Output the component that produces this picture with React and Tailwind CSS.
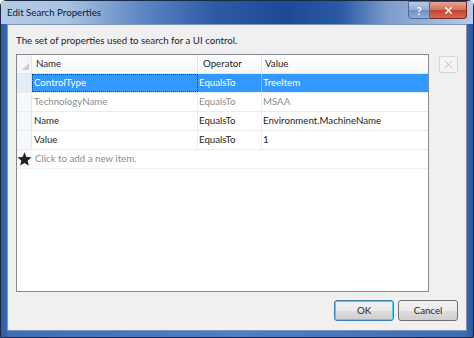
import { X } from 'lucide-react'

const rows = [
  { name: 'ControlType', op: 'EqualsTo', value: 'TreeItem', selected: true },
  { name: 'TechnologyName', op: 'EqualsTo', value: 'MSAA', disabled: true },
  { name: 'Name', op: 'EqualsTo', value: 'Environment.MachineName' },
  { name: 'Value', op: 'EqualsTo', value: '1' },
]

function Row({ row }) {
  const text = row.selected ? 'text-white' : row.disabled ? 'text-[#8d8d8d]' : 'text-[#1e1e1e]'
  return (
    <div className="grid grid-cols-[15px_166px_64px_1fr] h-[19px] border-b border-[#ececec]">
      <div className={row.selected ? 'bg-[#e3edf8] border-r border-[#dde3ea]' : 'bg-[#f7f8fa] border-r border-[#e4e7eb]'} />
      <div className={`flex items-center pl-[2px] ${text} ${row.selected ? 'bg-[#3399ff] outline outline-1 outline-dotted outline-[#1a3f7a] -outline-offset-1' : 'border-r border-[#ececec]'}`}>
        {row.name}
      </div>
      <div className={`flex items-center pl-[1px] ${text} ${row.selected ? 'bg-[#3399ff] border-r border-[#7fbcf7]' : 'border-r border-[#ececec]'}`}>
        {row.op}
      </div>
      <div className={`flex items-center pl-[1px] ${text} ${row.selected ? 'bg-[#3399ff]' : ''}`}>
        {row.value}
      </div>
    </div>
  )
}

export default function App() {
  return (
    <div
      className="w-[474px] h-[338px] overflow-hidden text-[9.7px] leading-none"
      style={{ fontFamily: 'Lato, "Noto Sans", sans-serif' }}
    >
      <div className="w-full h-full flex flex-col rounded-t-[6px] border border-[#1b2a44] bg-[linear-gradient(90deg,#2c5ca6_0%,#3d6fb8_2%,#4f7fc2_50%,#3d6db5_98%,#2a58a0_100%)]">
        {/* Title bar */}
        <div className="relative h-[23px] flex items-start bg-[linear-gradient(90deg,#b4cbe6_0%,#a9c2e2_14%,#5c86c4_30%,#2d5ba6_45%,#1d4a96_60%,#2a5aa6_72%,#7d9ccc_82%,#b7cbe6_100%)]">
          <div className="pl-[6px] pt-[7px] text-[#0f1b2c]">Edit Search Properties</div>
          <div className="ml-auto mr-[6px] flex h-[18px]">
            <div className="w-[22px] h-[18px] flex items-center justify-center rounded-bl-[4px] border border-[#4e6a94] bg-[linear-gradient(180deg,#b7cbe6_0%,#8eabd4_50%,#6f8fc0_52%,#90add6_100%)] text-white text-[11px] font-bold">?</div>
            <div className="w-[37px] h-[18px] flex items-center justify-center rounded-br-[4px] border border-l-0 border-[#6b2a24] bg-[linear-gradient(180deg,#e8a597_0%,#d4705f_48%,#c2452f_52%,#d66a50_100%)]">
              <X size={11} strokeWidth={3.2} className="text-white" />
            </div>
          </div>
        </div>

        {/* Client area */}
        <div className="mx-[6px] mb-[6px] flex-1 flex flex-col bg-[#f0f0f0] border border-[#7d95b8] px-[8px]">
          <div className="pt-[11px] h-[29px] text-[#1e1e1e]">The set of properties used to search for a UI control.</div>

          <div className="flex items-start">
            <div className="w-[414px] h-[238px] border border-[#828790] bg-white flex flex-col">
              <div className="grid grid-cols-[15px_166px_64px_1fr] h-[19px] border-b border-[#e5e5e5] bg-[linear-gradient(180deg,#ffffff_0%,#f7f8fa_100%)] text-[#1e1e1e]">
                <div className="relative border-r border-[#e4e7eb] bg-[#f4f6f9]">
                  <div className="absolute right-[2px] bottom-[3px] w-0 h-0 border-l-[7px] border-l-transparent border-b-[7px] border-b-[#c6ccd4]" />
                </div>
                <div className="flex items-center pl-[4px] border-r border-[#e5e5e5]">Name</div>
                <div className="flex items-center pl-[5px] border-r border-[#e5e5e5]">Operator</div>
                <div className="flex items-center pl-[3px]">Value</div>
              </div>
              {rows.map((r) => (
                <Row key={r.name} row={r} />
              ))}
              <div className="flex h-[19px] items-center border-b border-[#f2f2f2]">
                <div className="w-[15px] h-full flex items-center justify-center bg-[#f7f8fa]">
                  <svg width="15" height="14" viewBox="0 0 24 23">
                    <path d="M12 0.5l3.2 7.6 8.3 0.7-6.3 5.4 1.9 8.1L12 18l-7.1 4.3 1.9-8.1L0.5 8.8l8.3-0.7z" fill="#222" />
                  </svg>
                </div>
                <div className="pl-[3px] text-[#8d8d8d]">Click to add a new item.</div>
              </div>
            </div>
            <div className="ml-[10px] mt-[2px] w-[19px] h-[17px] flex items-center justify-center rounded-[2px] border border-[#d6d6d6] bg-[#f4f4f4]">
              <X size={13} strokeWidth={1.6} className="text-[#e8a8a8]" />
            </div>
          </div>

          <div className="mt-auto mb-[9px] flex justify-end gap-[4px]">
            <button className="w-[60px] h-[21px] rounded-[3px] border border-[#3c7fb1] bg-[linear-gradient(180deg,#f2f2f2_0%,#ebebeb_50%,#dddddd_51%,#cfcfcf_100%)] shadow-[inset_0_0_0_1px_#48d3fb] text-[#1e1e1e]">OK</button>
            <button className="w-[60px] h-[21px] rounded-[3px] border border-[#707070] bg-[linear-gradient(180deg,#f2f2f2_0%,#ebebeb_50%,#dddddd_51%,#cfcfcf_100%)] text-[#1e1e1e]">Cancel</button>
          </div>
        </div>
      </div>
    </div>
  )
}
